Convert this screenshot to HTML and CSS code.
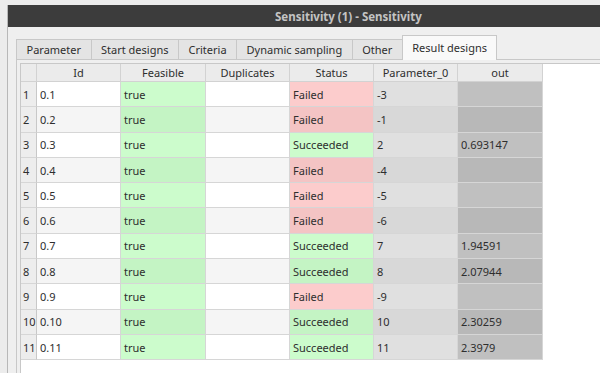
FILE: index.html
```html
<!DOCTYPE html>
<html lang="en">
<head>
    <meta charset="UTF-8">
    <title>Sensitivity (1) - Sensitivity</title>
<link rel="stylesheet" href="styles.css">
</head>
<body>
    <div class="desk">
        <div class="window">
            <div class="titlebar"><span class="title">Sensitivity (1) - Sensitivity</span></div>
            <div class="content">
                <div class="tabs">
                    <div class="tab">Parameter</div>
                    <div class="tab">Start designs</div>
                    <div class="tab">Criteria</div>
                    <div class="tab">Dynamic sampling</div>
                    <div class="tab">Other</div>
                    <div class="tab active">Result designs</div>
                </div>
                <div class="pane">
                    <div class="view">
                        <div class="grid" id="grid"></div>
                    </div>
                </div>
            </div>
        </div>
    </div>

<script>
    // Model
    let headers = ['', 'Id', 'Feasible', 'Duplicates', 'Status', 'Parameter_0', 'out'];
    let rows = [
        ['0.1', 'true', '', 'Failed', '-3', ''],
        ['0.2', 'true', '', 'Failed', '-1', ''],
        ['0.3', 'true', '', 'Succeeded', '2', '0.693147'],
        ['0.4', 'true', '', 'Failed', '-4', ''],
        ['0.5', 'true', '', 'Failed', '-5', ''],
        ['0.6', 'true', '', 'Failed', '-6', ''],
        ['0.7', 'true', '', 'Succeeded', '7', '1.94591'],
        ['0.8', 'true', '', 'Succeeded', '8', '2.07944'],
        ['0.9', 'true', '', 'Failed', '-9', ''],
        ['0.10', 'true', '', 'Succeeded', '10', '2.30259'],
        ['0.11', 'true', '', 'Succeeded', '11', '2.3979'],
    ];

    // View
    show();
    function show() {
        let html = '';
        for (let h of headers) {
            html += `<div class="head">${h}</div>`;
        }
        rows.forEach((r, i) => {
            let alt = i % 2 == 1 ? 'alt' : '';
            html += `<div class="num ${alt}">${i + 1}</div>`;
            html += `<div class="cell ${alt}">${r[0]}</div>`;
            html += `<div class="cell good ${alt}">${r[1]}</div>`;
            html += `<div class="cell ${alt}">${r[2]}</div>`;
            html += `<div class="cell ${r[3] == 'Failed' ? 'bad' : 'good'} ${alt}">${r[3]}</div>`;
            html += `<div class="cell param ${alt}">${r[4]}</div>`;
            html += `<div class="cell out ${alt}">${r[5]}</div>`;
        });
        document.getElementById('grid').innerHTML = html;
    }
</script>
</body>
</html>
```

FILE: styles.css
```css
body {
    margin: 0;
    background-color: #f6f6f6;
    font-family: "Noto Sans", "Open Sans", sans-serif;
    font-size: 11px;
    color: #2e2e2e;
    overflow: hidden;
}
.desk {
    height: 373px;
    padding-top: 5px;
    padding-left: 7px;
    box-sizing: border-box;
    background: #ececec;
}
.window {
    height: 100%;
    background-color: #efefef;
    border-left: 1px solid #b8b8b8;
    display: flex;
    flex-direction: column;
}
.titlebar {
    height: 22px;
    background-color: #3c3c3c;
    display: flex;
    align-items: center;
    padding-left: 267px;
    flex: none;
}
.title {
    color: #c4c4c4;
    font-weight: bold;
    font-size: 11.5px;
}
.content {
    flex: 1;
    padding: 7px 0 0 8px;
    display: flex;
    flex-direction: column;
    min-height: 0;
}
.tabs {
    display: flex;
    align-items: flex-end;
    height: 26px;
    flex: none;
}
.tab {
    height: 21px;
    line-height: 20px;
    padding: 0 9.5px;
    background-color: #e4e4e4;
    border: 1px solid #c8c8c8;
    border-bottom: none;
    margin-right: -1px;
    box-sizing: border-box;
}
.tab.active {
    height: 25px;
    line-height: 24px;
    background-color: #f9f9f9;
    position: relative;
    z-index: 1;
}
.pane {
    flex: 1;
    border: 1px solid #c8c8c8;
    border-right: none;
    border-bottom: none;
    margin-top: -1px;
    padding: 3px 0 0 3px;
    min-height: 0;
}
.view {
    height: 100%;
    background-color: #ffffff;
    border-left: 1px solid #c8c8c8;
    border-top: 1px solid #c8c8c8;
}
.grid {
    display: grid;
    grid-template-columns: 16px 84px 85px 84px 84px 84px 85px;
    grid-template-rows: 18px;
    grid-auto-rows: 25.3px;
    width: max-content;
}
.head {
    background-color: #ebebeb;
    border-right: 1px solid #d2d2d2;
    border-bottom: 1px solid #d2d2d2;
    text-align: center;
    line-height: 17px;
}
.num {
    background-color: #ededed;
    border-right: 1px solid #c8c8c8;
    border-bottom: 1px solid #d6d6d6;
    padding-left: 2px;
    display: flex;
    align-items: center;
}
.cell {
    background-color: #ffffff;
    border-right: 1px solid #d6d6d6;
    border-bottom: 1px solid #d6d6d6;
    padding-left: 3px;
    display: flex;
    align-items: center;
}
.cell.alt {
    background-color: #f5f5f5;
}
.good {
    background-color: #ccfccc;
}
.good.alt {
    background-color: #c4f4c4;
}
.bad {
    background-color: #fccccc;
}
.bad.alt {
    background-color: #f4c4c4;
}
.param {
    background-color: #e0e0e0;
}
.param.alt {
    background-color: #d8d8d8;
}
.out {
    background-color: #c0c0c0;
}
.out.alt {
    background-color: #b8b8b8;
}
```
